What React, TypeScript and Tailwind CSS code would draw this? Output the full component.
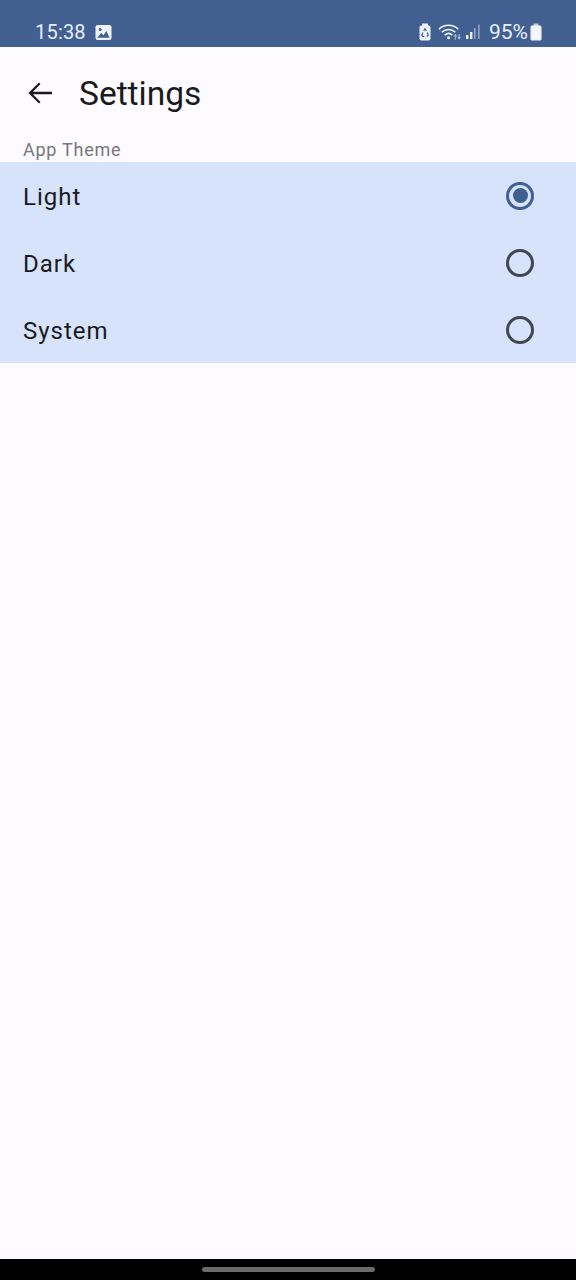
export default function App() {
  const rows = [
    { label: "Light", on: true },
    { label: "Dark", on: false },
    { label: "System", on: false },
  ];
  return (
    <div className="w-[576px] h-[1280px] flex flex-col bg-[#fdfbff] overflow-hidden font-['Roboto',sans-serif]">
      <div className="h-[47px] shrink-0 bg-[#415f91] flex items-center pl-[35px] pr-[34px] pt-[17px] text-[#e8eefa]">
        <span className="text-[20px] leading-[30px] tracking-[0.2px]">15:38</span>
        <svg className="ml-[9px]" width="17" height="17" viewBox="0 0 18 18">
          <rect x="0.5" y="1" width="17" height="16" rx="2.5" fill="#eef3fb" />
          <circle cx="5.5" cy="5.8" r="1.6" fill="#415f91" />
          <path d="M2.5 14.5 L6.5 9.5 L9 12 L12 7.5 L15.5 14.5 Z" fill="#415f91" />
        </svg>
        <div className="flex-1" />
        <svg width="14" height="18" viewBox="0 0 14 18">
          <rect x="4" y="0.5" width="6" height="2.5" fill="#eef3fb" />
          <rect x="1.5" y="2.5" width="11" height="15" rx="2" fill="#eef3fb" />
          <path d="M7 5.5 L8.4 8 M9.3 9.5 L10.3 12 L8.8 13.6 M6.4 13.6 H4.8 L3.8 12 L5 9.6 M5.7 8 L7 5.5" fill="none" stroke="#415f91" strokeWidth="1.2" />
        </svg>
        <svg className="ml-[6px]" width="25" height="18" viewBox="0 0 26 18">
          <path d="M1 6 C6.5 0.5 15.5 0.5 21 6" fill="none" stroke="#eef3fb" strokeWidth="1.6" />
          <path d="M4 9.2 C8 5.4 14 5.4 18 9.2" fill="none" stroke="#eef3fb" strokeWidth="1.6" />
          <path d="M7 12.3 C9.5 10 12.5 10 15 12.3" fill="none" stroke="#eef3fb" strokeWidth="1.6" />
          <circle cx="11" cy="15" r="1.6" fill="#eef3fb" />
          <path d="M18 17 V12 M16.4 13.6 L18 11.8 L19.6 13.6" fill="none" stroke="#a9b9d4" strokeWidth="1.1" />
          <path d="M22 11 V16 M20.6 14.4 L22 16.2 L23.4 14.4" fill="none" stroke="#a9b9d4" strokeWidth="1.1" />
        </svg>
        <svg className="ml-[2px]" width="16" height="18" viewBox="0 0 16 18">
          <rect x="1" y="12" width="2.4" height="4" fill="#eef3fb" />
          <rect x="5" y="9" width="2.4" height="7" fill="#eef3fb" />
          <rect x="9" y="5" width="1.6" height="11" fill="#8ea3c6" />
          <rect x="13" y="1.5" width="1.6" height="14.5" fill="#8ea3c6" />
        </svg>
        <span className="ml-[8px] text-[21px] leading-[30px]">95%</span>
        <svg className="ml-[2px]" width="12" height="18" viewBox="0 0 12 18">
          <rect x="3.5" y="0.5" width="5" height="2.5" fill="#b9c7de" />
          <rect x="0.5" y="2.5" width="11" height="15" rx="1.5" fill="#f2f5fb" />
        </svg>
      </div>

      <div className="h-[92px] shrink-0 flex items-center pl-[28px]">
        <svg width="24" height="24" viewBox="0 0 24 24" fill="#1a1b20">
          <path d="M24 10.7H4.9l7.6-7.6L11 1.4 0.4 12 11 22.6l1.5-1.7-7.6-7.6H24z" />
        </svg>
        <span className="ml-[27px] pt-[1px] text-[33.5px] leading-[40px] text-[#1a1b20]">Settings</span>
      </div>

      <div className="h-[23px] shrink-0 pl-[23px] text-[18px] leading-[22px] tracking-[0.75px] text-[#77777c]">App Theme</div>

      <div className="h-[201px] shrink-0 bg-[#d6e3fb] flex flex-col">
        {rows.map((r) => (
          <div key={r.label} className="h-[67px] flex items-center justify-between pl-[23px] pr-[42px]">
            <span className="text-[24px] leading-[32px] pt-[2px] tracking-[1px] text-[#1a1b20]">{r.label}</span>
            {r.on ? (
              <div className="w-[28px] h-[28px] rounded-full border-[3px] border-[#415f91] flex items-center justify-center">
                <div className="w-[15px] h-[15px] rounded-full bg-[#415f91]" />
              </div>
            ) : (
              <div className="w-[28px] h-[28px] rounded-full border-[3px] border-[#43474e]" />
            )}
          </div>
        ))}
      </div>

      <div className="flex-1" />

      <div className="h-[21px] shrink-0 bg-black flex items-start justify-center pt-[8px]">
        <div className="w-[173px] h-[5px] rounded-full bg-[#6b6b6b]" />
      </div>
    </div>
  );
}
